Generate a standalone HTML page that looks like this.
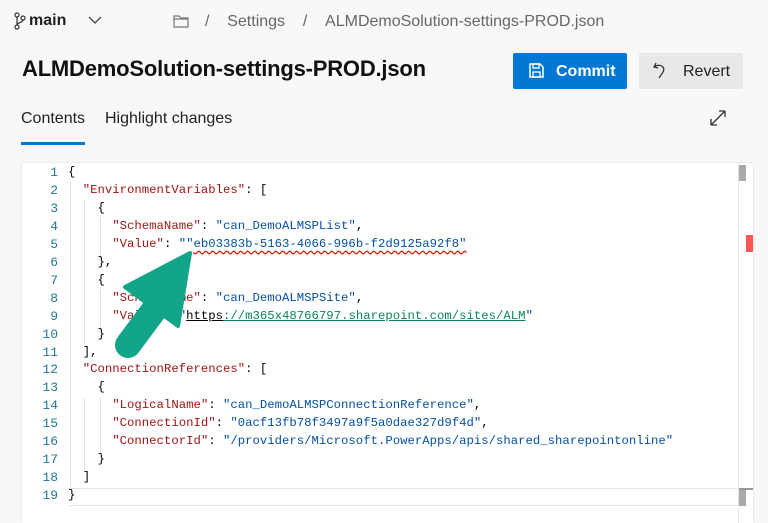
<!DOCTYPE html>
<html><head><meta charset="utf-8"><style>
body{margin:0;width:768px;height:520px;background:#f8f8f8;font-family:"Liberation Sans",sans-serif;overflow:hidden;position:relative;color:#201f1e}
.abs{position:absolute;white-space:nowrap}
.code{position:absolute;left:22px;top:163px;width:731px;height:360px;background:#fff;box-shadow:0 0 2px rgba(0,0,0,.15)}
.ln{position:absolute;left:0;width:36px;text-align:right;font:13px/17.95px "Liberation Mono",monospace;color:#237893;top:1px}
.src{position:absolute;left:46px;top:1px;font:12.3px/17.95px "Liberation Mono",monospace;color:#000;white-space:pre}
.k{color:#a31515}.s{color:#0451a5}
.sq{text-decoration:underline wavy #e51400;text-underline-offset:3px}
.u{text-decoration:underline;text-decoration-color:#000}
</style></head><body>
<svg class="abs" style="left:13px;top:12px" width="14" height="18" viewBox="0 0 14 18"><circle cx="4" cy="3" r="2" fill="none" stroke="#333" stroke-width="1.2"/><circle cx="4" cy="15" r="2" fill="none" stroke="#333" stroke-width="1.2"/><circle cx="10" cy="6" r="2" fill="none" stroke="#333" stroke-width="1.2"/><path d="M4 5V13M10 8C10 11 4 10 4 13" fill="none" stroke="#333" stroke-width="1.2"/></svg>
<div class="abs" style="left:29px;top:12px;font-size:16px;font-weight:bold">main</div>
<svg class="abs" style="left:88px;top:15px" width="14" height="10"><path d="M1 2L7 8L13 2" fill="none" stroke="#444" stroke-width="1.3"/></svg>
<svg class="abs" style="left:173px;top:14px" width="16" height="14"><path d="M1 2H6L8 4H15V13H1Z M1 5H15" fill="none" stroke="#777" stroke-width="1.2"/></svg>
<div class="abs" style="left:205px;top:13px;font-size:16px;color:#666">/&nbsp;&nbsp;&nbsp;&nbsp;Settings&nbsp;&nbsp;&nbsp;&nbsp;/&nbsp;&nbsp;&nbsp;&nbsp;ALMDemoSolution-settings-PROD.json</div>
<div class="abs" style="left:22px;top:56px;font-size:22px;font-weight:bold;color:#111;letter-spacing:-0.2px">ALMDemoSolution-settings-PROD.json</div>
<div class="abs" style="left:513px;top:53px;width:114px;height:36px;background:#0078d4;border-radius:2px;color:#fff"><svg style="position:absolute;left:16px;top:10px" width="15" height="15"><path d="M1 1H11L14 4V14H1Z" fill="none" stroke="#fff" stroke-width="1.5"/><rect x="4" y="1" width="6" height="4" fill="none" stroke="#fff" stroke-width="1.3"/><rect x="4" y="9" width="7" height="5" fill="none" stroke="#fff" stroke-width="1.3"/></svg><span style="position:absolute;left:43px;top:10px;font-size:16px;font-weight:bold">Commit</span></div>
<div class="abs" style="left:639px;top:53px;width:104px;height:36px;background:#e8e8e8;border-radius:2px"><svg style="position:absolute;left:13px;top:8px" width="16" height="20"><path d="M4 2L2 6L6 7M2 6C8 2 14 6 11 11C10 13 8 15 7 17" fill="none" stroke="#333" stroke-width="1.3"/></svg><span style="position:absolute;left:44px;top:10px;font-size:16px;color:#222">Revert</span></div>
<div class="abs" style="left:21px;top:110px;font-size:16px;color:#222">Contents</div>
<div style="position:absolute;left:21px;top:142px;width:64px;height:3px;background:#0078d4"></div>
<div class="abs" style="left:105px;top:110px;font-size:16px;color:#222">Highlight changes</div>
<svg class="abs" style="left:709px;top:109px" width="18" height="18"><path d="M2 16L16 2M2 16V10M2 16H8M16 2H10M16 2V8" fill="none" stroke="#333" stroke-width="1.3"/></svg>
<div class="code">
<div style="position:absolute;left:46px;top:325px;width:670px;height:16px;border:1px solid #e5e5e5;border-left:none;border-right:none"></div>
<div style="position:absolute;left:48px;top:19px;width:1px;height:304px;background:#e0e0e0"></div>
<div style="position:absolute;left:62px;top:37px;width:1px;height:144px;background:#e0e0e0"></div>
<div style="position:absolute;left:62px;top:235px;width:1px;height:72px;background:#e0e0e0"></div>
<div style="position:absolute;left:78px;top:55px;width:1px;height:36px;background:#e0e0e0"></div>
<div style="position:absolute;left:78px;top:127px;width:1px;height:36px;background:#e0e0e0"></div>
<div style="position:absolute;left:78px;top:235px;width:1px;height:54px;background:#e0e0e0"></div>
<div class="ln">1<br>2<br>3<br>4<br>5<br>6<br>7<br>8<br>9<br>10<br>11<br>12<br>13<br>14<br>15<br>16<br>17<br>18<br>19</div>
<div class="src">{
  <span class="k">"EnvironmentVariables"</span>: [
    {
      <span class="k">"SchemaName"</span>: <span class="s">"can_DemoALMSPList"</span>,
      <span class="k">"Value"</span>: <span class="s">""<span class="sq">eb03383b-5163-4066-996b-f2d9125a92f8"</span></span>
    },
    {
      <span class="k">"SchemaName"</span>: <span class="s">"can_DemoALMSPSite"</span>,
      <span class="k">"Value"</span>: <span class="s">"<span class="u" style="color:#000">https</span><span class="u" style="color:#098658;text-decoration-color:#098658">://m365x48766797.sharepoint.com/sites/ALM</span>"</span>
    }
  ],
  <span class="k">"ConnectionReferences"</span>: [
    {
      <span class="k">"LogicalName"</span>: <span class="s">"can_DemoALMSPConnectionReference"</span>,
      <span class="k">"ConnectionId"</span>: <span class="s">"0acf13fb78f3497a9f5a0dae327d9f4d"</span>,
      <span class="k">"ConnectorId"</span>: <span class="s">"/providers/Microsoft.PowerApps/apis/shared_sharepointonline"</span>
    }
  ]
}</div>
<div style="position:absolute;left:716px;top:0;width:1px;height:360px;background:#e5e5e5"></div>
<div style="position:absolute;left:717px;top:2px;width:7px;height:16px;background:#aaa"></div>
<div style="position:absolute;left:724px;top:72px;width:7px;height:17px;background:#f55"></div>
<div style="position:absolute;left:717px;top:325px;width:14px;height:2px;background:#999"></div>
<div style="position:absolute;left:717px;top:327px;width:7px;height:16px;background:#aaa"></div>
</div>
<svg class="abs" style="left:0;top:0" width="768" height="520"><line x1="128" y1="345" x2="160" y2="302" stroke="#12a589" stroke-width="26" stroke-linecap="round"/><polygon points="190,253 125,287 178,326" fill="#12a589" stroke="#12a589" stroke-width="4" stroke-linejoin="round"/></svg>
</body></html>
